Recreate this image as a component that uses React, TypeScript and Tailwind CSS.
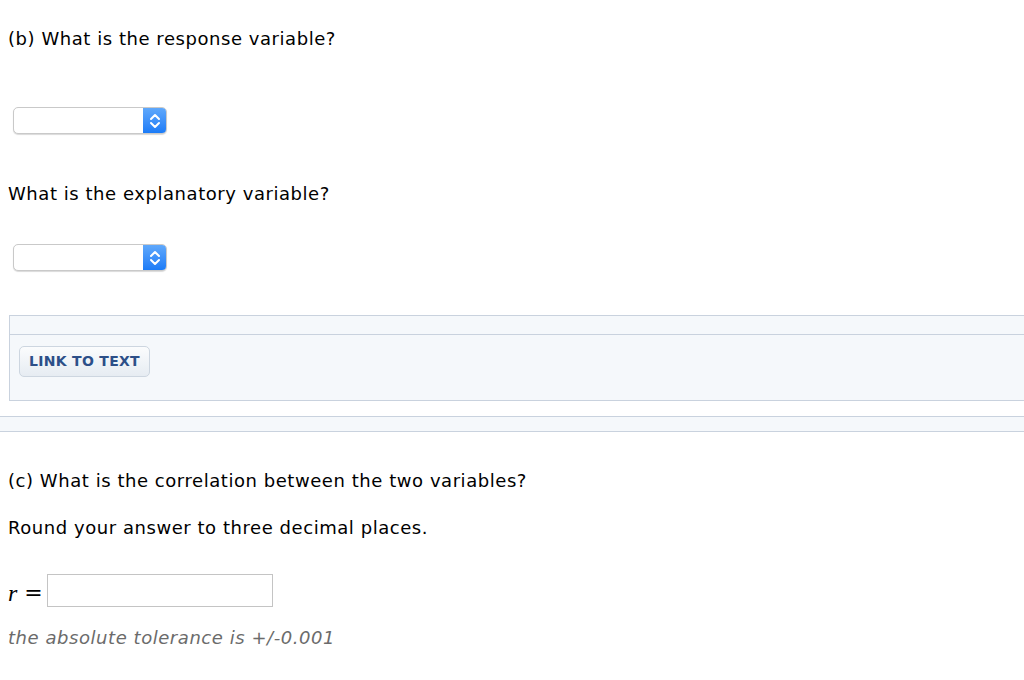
import React from "react";

const font = { fontFamily: "'DejaVu Sans', sans-serif" };
const serif = { fontFamily: "'Liberation Serif', 'Times New Roman', serif" };

const Select = () => (
  <div className="flex h-[27px] w-[154px] overflow-hidden rounded-[5px] border border-[#c9c9c9] bg-white shadow-[0_1px_1px_rgba(0,0,0,0.15)]">
    <div className="flex-1" />
    <div className="flex w-[23px] items-center justify-center bg-gradient-to-b from-[#5fa8fb] to-[#1a7bf7]">
      <svg width="12" height="18" viewBox="0 0 12 18" fill="none" stroke="white" strokeWidth="2" strokeLinecap="round" strokeLinejoin="round">
        <path d="M2 7 L6 3 L10 7" />
        <path d="M2 11 L6 15 L10 11" />
      </svg>
    </div>
  </div>
);

const App = () => {
  return (
    <div className="min-h-[680px] bg-white text-[18px] tracking-[0.55px] text-black" style={font}>
      <div className="px-2 pt-[27px]">
        <p className="leading-[24px]">(b) What is the response variable?</p>
        <div className="ml-[5px] mt-[56px]">
          <Select />
        </div>
        <p className="mt-[48px] leading-[24px]">What is the explanatory variable?</p>
        <div className="ml-[5px] mt-[38px]">
          <Select />
        </div>
      </div>

      <div className="ml-[9px] mt-[44px] border border-r-0 border-[#c9d2de] bg-[#f5f8fb]">
        <div className="h-[19px] border-b border-[#c9d2de]" />
        <div className="h-[65px] px-[9px] pt-[11px]">
          <button className="h-[31px] rounded-[5px] border border-[#cdd6e0] bg-gradient-to-b from-[#fbfcfd] to-[#e6ecf2] px-[9px] text-[14px] font-bold tracking-[0.3px] text-[#2c4f88]">
            LINK TO TEXT
          </button>
        </div>
      </div>

      <div className="mt-[15px] h-[16px] border-y border-[#c9d2de] bg-[#f5f8fb]" />

      <div className="px-2">
        <p className="mt-[37px] leading-[24px]">(c) What is the correlation between the two variables?</p>
        <p className="mt-[23px] leading-[24px]">Round your answer to three decimal places.</p>
        <div className="mt-[34px] flex items-end">
          <span className="pb-[1px] text-[24px] italic leading-[26px] tracking-normal" style={serif}>
            r
          </span>
          <span className="ml-[7px] mr-[4px] text-[22px] leading-[28px] tracking-normal">
            =
          </span>
          <div className="h-[33px] w-[226px] border border-[#c4c4c4] bg-white" />
        </div>
        <p className="mt-[19px] italic leading-[24px] text-[#6b6b6b]">the absolute tolerance is +/-0.001</p>
      </div>
    </div>
  );
};

export default App;
